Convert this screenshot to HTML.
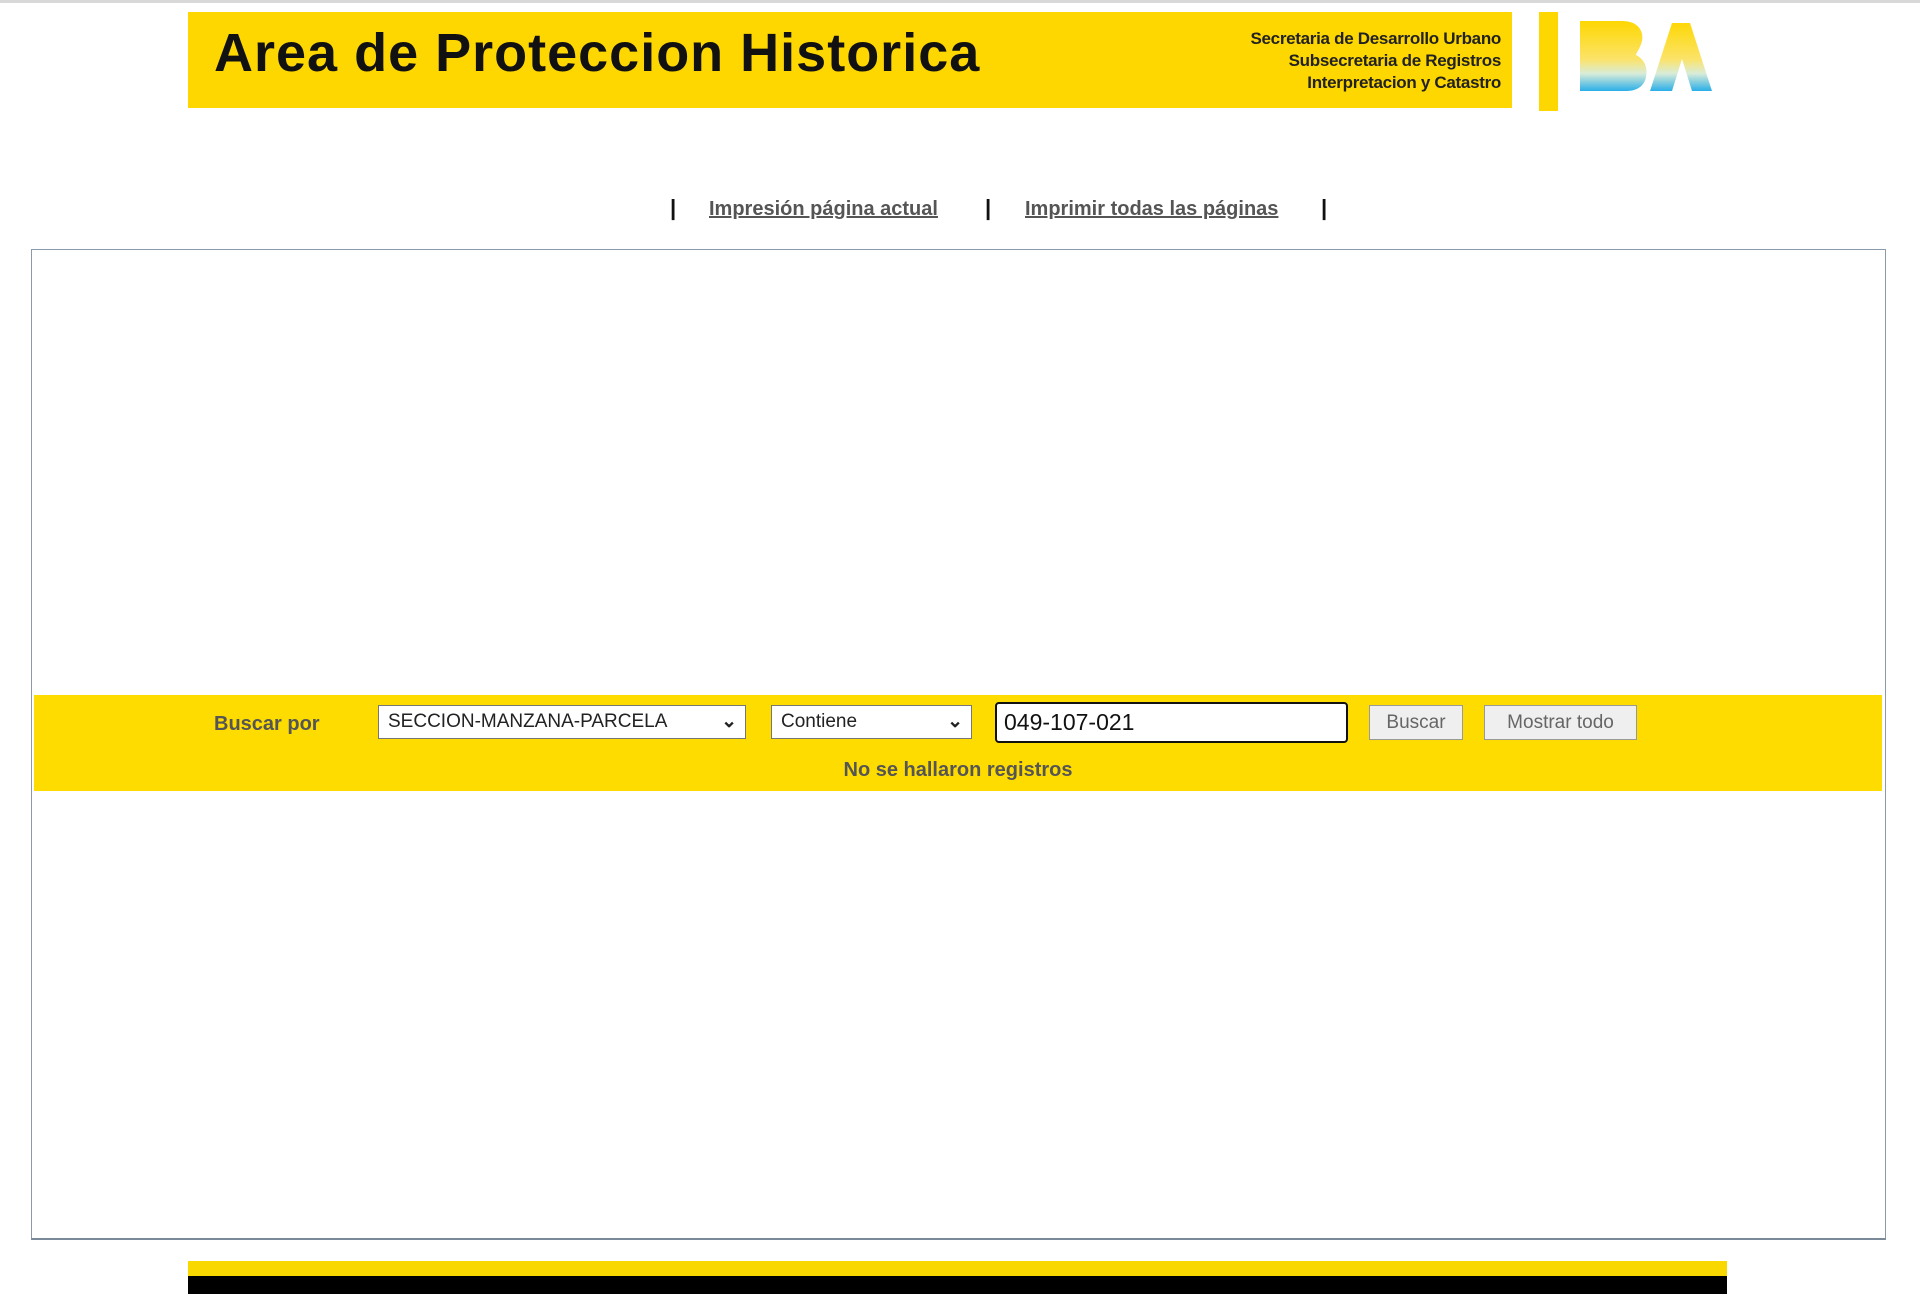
<!DOCTYPE html>
<html><head><meta charset="utf-8"><style>
body{margin:0;width:1920px;height:1307px;background:#fff;position:relative;font-family:"Liberation Sans",sans-serif;overflow:hidden}
.a{position:absolute}
.l{position:absolute;top:195px;font-size:20px;font-weight:bold;color:#555;line-height:28px;text-decoration:underline;white-space:nowrap}
.p{position:absolute;top:194px;font-size:22px;font-weight:bold;color:#111;line-height:28px}
</style></head><body>
<div class="a" style="left:0;top:0;width:1920px;height:3px;background:#d8d8d8"></div>
<div class="a" style="left:188px;top:12px;width:1324px;height:96px;background:#fed700"></div>
<div class="a" style="left:214px;top:22px;font-size:54px;font-weight:bold;color:#111;letter-spacing:1px;line-height:62px">Area de Proteccion Historica</div>
<div class="a" style="left:1100px;top:28px;width:401px;text-align:right;font-size:17px;font-weight:bold;line-height:22px;color:#222;letter-spacing:-0.3px">Secretaria de Desarrollo Urbano<br>Subsecretaria de Registros<br>Interpretacion y Catastro</div>
<div class="a" style="left:1539px;top:12px;width:19px;height:99px;background:#fed700"></div>
<svg class="a" style="left:1580px;top:21px" width="132" height="72" viewBox="0 0 132 72">
<defs><linearGradient id="g" x1="0" y1="0" x2="0" y2="1"><stop offset="0" stop-color="#fed700"/><stop offset=".55" stop-color="#fbe36a"/><stop offset=".75" stop-color="#d9ecd8"/><stop offset="1" stop-color="#2aaee8"/></linearGradient></defs>
<path fill="url(#g)" d="M0 0H42C58 0 64 10 62 20C60 28 56 32 56 34C64 38 68 46 66 56C64 66 56 70 46 70H0Z M70 70L92 2H110L132 70H112L102 38L92 70Z"/>
</svg>
<div class="p" style="left:670px">|</div>
<div class="l" style="left:709px">Impresión página actual</div>
<div class="p" style="left:985px">|</div>
<div class="l" style="left:1025px">Imprimir todas las páginas</div>
<div class="p" style="left:1321px">|</div>
<div class="a" style="left:31px;top:249px;width:1853px;height:988px;border:1px solid #8a9aaa;border-bottom:2px solid #7a8a99"></div>
<div class="a" style="left:34px;top:695px;width:1848px;height:96px;background:#fedc00"></div>
<div class="a" style="left:214px;top:712px;font-size:20px;font-weight:bold;color:#555;line-height:24px">Buscar por</div>
<div class="a" style="left:378px;top:705px;width:368px;height:34px;border:1px solid #777;background:#fff;box-sizing:border-box;font-size:19px;line-height:32px;padding-left:9px;color:#222">SECCION-MANZANA-PARCELA<span style="position:absolute;right:8px;font-weight:bold">&#8964;</span></div>
<div class="a" style="left:771px;top:705px;width:201px;height:34px;border:1px solid #777;background:#fff;box-sizing:border-box;font-size:19px;line-height:32px;padding-left:9px;color:#222">Contiene<span style="position:absolute;right:8px;font-weight:bold">&#8964;</span></div>
<div class="a" style="left:995px;top:702px;width:353px;height:41px;border:2px solid #111;border-radius:4px;background:#fff;box-sizing:border-box;font-size:23px;line-height:36px;padding-left:7px;color:#111">049-107-021</div>
<div class="a" style="left:1369px;top:705px;width:94px;height:35px;border:1px solid #999;background:#efefef;box-sizing:border-box;font-size:19px;line-height:33px;text-align:center;color:#666">Buscar</div>
<div class="a" style="left:1484px;top:705px;width:153px;height:35px;border:1px solid #999;background:#efefef;box-sizing:border-box;font-size:19px;line-height:33px;text-align:center;color:#666">Mostrar todo</div>
<div class="a" style="left:34px;top:758px;width:1848px;text-align:center;font-size:20px;font-weight:bold;color:#555;line-height:24px">No se hallaron registros</div>
<div class="a" style="left:188px;top:1261px;width:1539px;height:15px;background:#f9d800"></div>
<div class="a" style="left:188px;top:1276px;width:1539px;height:18px;background:#000"></div>
</body></html>
